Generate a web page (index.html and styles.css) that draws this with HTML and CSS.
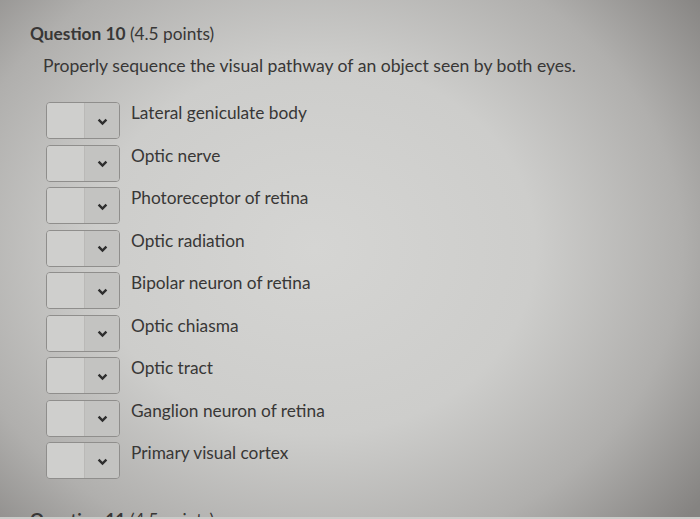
FILE: index.html
```html
<html>
  <head>
    <title>Question 10</title>
    <meta name="viewport" content="width=device-width, initial-scale=1.0">
    <link rel="stylesheet" href="styles.css">
  </head>
  <body>
    <div class="screen">
      <div class="question">
        <h2 class="q-title"><b>Question 10</b> (4.5 points)</h2>
        <p class="q-text">Properly sequence the visual pathway of an object seen by both eyes.</p>
        <ul class="order-list">
          <li class="order-row"><span class="pick"><span class="pick-val"></span><span class="pick-arrow"><svg width="11" height="8" viewBox="0 0 11 8"><path d="M1.6 1.6 L5.5 5.5 L9.4 1.6" fill="none" stroke="#2e2e2e" stroke-width="2.4"/></svg></span></span><span class="label">Lateral geniculate body</span></li>
          <li class="order-row"><span class="pick"><span class="pick-val"></span><span class="pick-arrow"><svg width="11" height="8" viewBox="0 0 11 8"><path d="M1.6 1.6 L5.5 5.5 L9.4 1.6" fill="none" stroke="#2e2e2e" stroke-width="2.4"/></svg></span></span><span class="label">Optic nerve</span></li>
          <li class="order-row"><span class="pick"><span class="pick-val"></span><span class="pick-arrow"><svg width="11" height="8" viewBox="0 0 11 8"><path d="M1.6 1.6 L5.5 5.5 L9.4 1.6" fill="none" stroke="#2e2e2e" stroke-width="2.4"/></svg></span></span><span class="label">Photoreceptor of retina</span></li>
          <li class="order-row"><span class="pick"><span class="pick-val"></span><span class="pick-arrow"><svg width="11" height="8" viewBox="0 0 11 8"><path d="M1.6 1.6 L5.5 5.5 L9.4 1.6" fill="none" stroke="#2e2e2e" stroke-width="2.4"/></svg></span></span><span class="label">Optic radiation</span></li>
          <li class="order-row"><span class="pick"><span class="pick-val"></span><span class="pick-arrow"><svg width="11" height="8" viewBox="0 0 11 8"><path d="M1.6 1.6 L5.5 5.5 L9.4 1.6" fill="none" stroke="#2e2e2e" stroke-width="2.4"/></svg></span></span><span class="label">Bipolar neuron of retina</span></li>
          <li class="order-row"><span class="pick"><span class="pick-val"></span><span class="pick-arrow"><svg width="11" height="8" viewBox="0 0 11 8"><path d="M1.6 1.6 L5.5 5.5 L9.4 1.6" fill="none" stroke="#2e2e2e" stroke-width="2.4"/></svg></span></span><span class="label">Optic chiasma</span></li>
          <li class="order-row"><span class="pick"><span class="pick-val"></span><span class="pick-arrow"><svg width="11" height="8" viewBox="0 0 11 8"><path d="M1.6 1.6 L5.5 5.5 L9.4 1.6" fill="none" stroke="#2e2e2e" stroke-width="2.4"/></svg></span></span><span class="label">Optic tract</span></li>
          <li class="order-row"><span class="pick"><span class="pick-val"></span><span class="pick-arrow"><svg width="11" height="8" viewBox="0 0 11 8"><path d="M1.6 1.6 L5.5 5.5 L9.4 1.6" fill="none" stroke="#2e2e2e" stroke-width="2.4"/></svg></span></span><span class="label">Ganglion neuron of retina</span></li>
          <li class="order-row"><span class="pick"><span class="pick-val"></span><span class="pick-arrow"><svg width="11" height="8" viewBox="0 0 11 8"><path d="M1.6 1.6 L5.5 5.5 L9.4 1.6" fill="none" stroke="#2e2e2e" stroke-width="2.4"/></svg></span></span><span class="label">Primary visual cortex</span></li>
        </ul>
      </div>
      <div class="question">
        <h2 class="q-title"><b>Question 11</b> (4.5 points)</h2>
      </div>
    </div>
    <div class="edge"></div>
  </body>
</html>
```

FILE: styles.css
```css
*{
  margin: 0px;
  padding: 0px;
  box-sizing: border-box;
}

body{
  width: 700px;
  height: 519px;
  overflow: hidden;
  font-family: Lato, "Open Sans", sans-serif;
  color: #383736;
  background-color: #8a8886;
}

/* photographed screen, darker toward the edges */
.screen{
  height: 517px;
  overflow: hidden;
  padding: 23px 0px 0px 30px;
  background:
    radial-gradient(ellipse 70% 80% at 45% 48%, #d5d5d3 0%, #cdcdcb 45%, #b0afad 75%, #858381 100%);
}

.question{
  margin-bottom: 24px;
}

.q-title{
  font-size: 17.3px;
  font-weight: normal;
  line-height: 22px;
}

.q-title b{
  font-weight: bold;
}

.q-text{
  font-size: 17.6px;
  line-height: 22px;
  margin: 10px 0px 0px 13px;
}

.order-list{
  list-style-type: none;
  margin: 25px 0px 0px 16px;
}

.order-row{
  display: flex;
  align-items: flex-start;
  gap: 11px;
  height: 42.5px;
}

.pick{
  display: flex;
  width: 74px;
  height: 37px;
  border: 1px solid #8f8e8c;
  border-radius: 4px;
  overflow: hidden;
}

.pick-val{
  width: 37px;
  background-color: #cfcfcd;
}

.pick-arrow{
  flex: 1;
  display: flex;
  align-items: center;
  justify-content: center;
  background-color: #c3c3c1;
  border-left: 1px solid #bab9b7;
  padding-top: 2px;
}

.label{
  font-size: 17.3px;
  line-height: 22px;
}

.edge{
  height: 2px;
  background-color: #cbcbc9;
}
```
